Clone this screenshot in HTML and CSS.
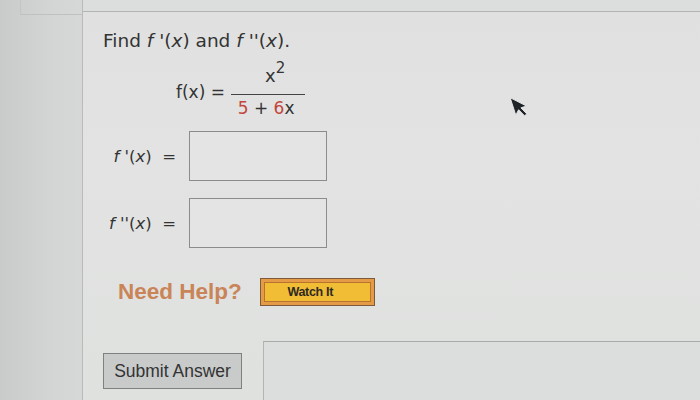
FILE: index.html
```html
<!DOCTYPE html>
<html>
<head>
<meta charset="utf-8">
<link rel="stylesheet" href="styles.css">
</head>
<body>
<div class="screen">
  <div class="side">
    <div class="side-top"></div>
  </div>
  <div class="main">
    <div class="topbar"></div>
    <div class="content">
      <p class="question">Find <i>f</i> '(<i>x</i>) and <i>f</i> ''(<i>x</i>).</p>
      <div class="func">
        <span class="fx">f(x) =</span>
        <span class="frac">
          <span class="num">x<sup>2</sup></span>
          <span class="den"><span class="red">5</span> + <span class="red">6</span>x</span>
        </span>
      </div>
      <div class="row r1">
        <span class="lbl"><i>f</i> '(<i>x</i>) &nbsp;=</span>
        <span class="box"></span>
      </div>
      <div class="row r2">
        <span class="lbl"><i>f</i> ''(<i>x</i>) &nbsp;=</span>
        <span class="box"></span>
      </div>
      <div class="help">
        <span class="need">Need Help?</span>
        <span class="watch"><span class="watch-in">Watch It</span></span>
      </div>
      <div class="bottom">
        <span class="submit">Submit Answer</span>
        <span class="next"></span>
      </div>
    </div>
  </div>
</div>
<svg class="cursor" width="18" height="26" viewBox="0 0 16 24">
  <path d="M2 1 L2 18 L6 14 L9.5 21 L12 20 L8.6 13 L14 13 Z" fill="#1e2428" stroke="#e8e8e8" stroke-width="0.8" transform="rotate(-18 8 12)"/>
</svg>
</body>
</html>
```
FILE: styles.css
```css
html, body { margin: 0; padding: 0; }
body {
  width: 700px; height: 400px; overflow: hidden;
  background: #d8dad9;
  font-family: "DejaVu Sans", Verdana, sans-serif;
  color: #3a3a3a;
  position: relative;
}
.screen { display: flex; width: 700px; height: 400px; }
.side {
  width: 82px; flex: none;
  background: linear-gradient(90deg, #c9cbcb 0%, #d3d5d5 60%, #d6d8d8 100%);
  border-right: 1px solid #b9bbbb;
}
.side-top {
  margin-left: 20px; height: 14px;
  border-bottom: 1px solid #bfc1c1;
  border-left: 1px solid #c3c5c5;
}
.main {
  flex: 1;
  background: linear-gradient(180deg, #dfe0df 0%, #e2e3e2 40%, #dfe1df 100%);
  display: flex; flex-direction: column;
}
.topbar { height: 11px; border-bottom: 1px solid #b2b4b4; background: #dcdedd; }
.content { padding-left: 20px; flex: 1; display: flex; flex-direction: column; }
.question { margin: 17px 0 0 0; font-size: 18.5px; line-height: 24px; color: #333; }
.func { display: flex; align-items: center; margin: 6px 0 0 73px; font-size: 17px; color: #333; }
.fx { margin-right: 6px; padding-top: 4px; }
.frac { display: inline-flex; flex-direction: column; align-items: center; }
.num { border-bottom: 1px solid #444; line-height: 26px; font-size: 18px; padding: 4px 20px 5px 34px; }
.num sup { font-size: 15px; vertical-align: 9px; line-height: 0; }
.den { line-height: 24px; font-size: 17px; padding-right: 4px; padding-top: 1px; }
.red { color: #c4453e; }
.row { display: flex; align-items: center; margin-top: 11px; }
.r2 { margin-top: 17px; }
.lbl { font-size: 16.5px; color: #333; width: 86px; text-align: right; padding-right: 13px; box-sizing: border-box; white-space: nowrap; }
.box {
  width: 136px; height: 48px;
  border: 1px solid #8b8d8d;
  background: #e3e4e3;
}
.help { display: flex; align-items: center; margin-top: 30px; margin-left: 15px; }
.need { font-family: "Liberation Sans", Arial, sans-serif; font-weight: bold; font-size: 22.5px; color: #c98457; }
.watch {
  margin-left: 18px;
  width: 115px; height: 28px; box-sizing: border-box;
  border: 1px solid #7d5a3a;
  background: #e59a45;
  padding: 3px;
  display: flex;
}
.watch-in {
  flex: 1;
  background: #f0bd35;
  border: 1px solid #b8742e;
  font-family: "Liberation Sans", Arial, sans-serif;
  font-weight: bold; font-size: 12.5px; color: #2f2a22;
  letter-spacing: -0.3px;
  display: flex; align-items: center; justify-content: center;
  padding-right: 14px;
}
.bottom { display: flex; margin-top: 35px; align-items: flex-start; flex: 1; }
.submit {
  width: 139px; height: 36px; box-sizing: border-box;
  border: 1px solid #7f8181;
  background: #c9cbcb;
  font-family: "Liberation Sans", Arial, sans-serif;
  font-size: 17.5px; color: #333;
  display: flex; align-items: center; justify-content: center;
  margin-top: 12px;
}
.next {
  flex: 1; margin-left: 21px; align-self: stretch;
  border-top: 1px solid #a9abab;
  border-left: 1px solid #b3b5b5;
  background: #dcdedd;
}
.cursor { position: absolute; left: 511px; top: 94px; }
```
